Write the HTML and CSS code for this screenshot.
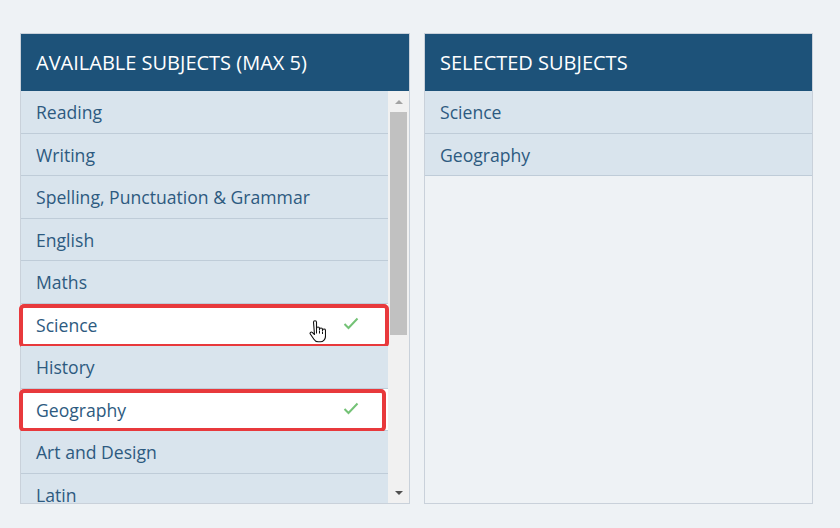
FILE: index.html
```html
<!DOCTYPE html>
<html lang="en">
<head>
    <meta charset="UTF-8">
    <meta name="viewport" content="width=device-width, initial-scale=1.0">
    <title>Subjects</title>
    <link rel="stylesheet" href="styles.css">
</head>
<body>
    <div class="picker">
        <div class="panel">
            <div class="panel-head">Available Subjects (Max 5)</div>
            <div class="panel-body">
                <div class="list">
                    <div class="row">Reading</div>
                    <div class="row">Writing</div>
                    <div class="row">Spelling, Punctuation &amp; Grammar</div>
                    <div class="row">English</div>
                    <div class="row">Maths</div>
                    <div class="row picked">Science
                        <svg class="tick" width="16" height="13" viewBox="0 0 16 13"><polyline points="1.5,7 5.5,11 14.5,1.5" fill="none" stroke="#74c276" stroke-width="2"/></svg>
                        <svg class="hand" width="18" height="24" viewBox="0 0 18 24">
                            <path d="M5.5 2.2a1.5 1.5 0 0 1 3 0v7.3v-1a1.5 1.5 0 0 1 3 0v1a1.5 1.5 0 0 1 3 0v1a1.5 1.5 0 0 1 3 0v5.5c0 3.2-2.2 5.8-5.2 5.8h-2.2c-2 0-3.2-1-4.2-2.6l-3.6-5.2c-.8-1.2.8-2.6 1.9-1.6l2.3 2.1z" fill="#fff" stroke="#111" stroke-width="1.1" stroke-linejoin="round"/>
                            <path d="M8.5 10v3.5M11.5 10.5v3M14.5 11.5v2.5" stroke="#111" stroke-width="1"/>
                        </svg>
                    </div>
                    <div class="row">History</div>
                    <div class="row picked alt">Geography
                        <svg class="tick" width="16" height="13" viewBox="0 0 16 13"><polyline points="1.5,7 5.5,11 14.5,1.5" fill="none" stroke="#74c276" stroke-width="2"/></svg>
                    </div>
                    <div class="row">Art and Design</div>
                    <div class="row">Latin</div>
                </div>
                <div class="scrollbar">
                    <div class="arrow up"></div>
                    <div class="track"><div class="thumb"></div></div>
                    <div class="arrow down"></div>
                </div>
            </div>
        </div>
        <div class="panel">
            <div class="panel-head">Selected Subjects</div>
            <div class="panel-body">
                <div class="list">
                    <div class="row">Science</div>
                    <div class="row">Geography</div>
                </div>
            </div>
        </div>
    </div>
</body>
</html>
```

FILE: styles.css
```css
body, html {
    margin: 0;
    padding: 0;
    background-color: #eef2f5;
    font-family: "Open Sans", Arial, sans-serif;
}
.picker {
    display: flex;
    gap: 14px;
    padding: 33px 0 0 20px;
}
.panel {
    box-sizing: border-box;
    width: 390px;
    height: 471px;
    border: 1px solid #c9d1da;
    display: flex;
    flex-direction: column;
}
.panel + .panel {
    width: 389px;
}
.panel-head {
    height: 57px;
    flex: none;
    display: flex;
    align-items: center;
    padding-left: 15px;
    background-color: #1d5279;
    color: #fff;
    font-size: 20px;
    text-transform: uppercase;
}
.panel-body {
    flex: 1;
    min-height: 0;
    display: flex;
}
.list {
    flex: 1;
    min-width: 0;
    clip-path: inset(-6px -6px 0 -6px);
}
.row {
    position: relative;
    box-sizing: border-box;
    height: 42.5px;
    display: flex;
    align-items: center;
    padding: 1px 15px 0;
    background-color: #d9e4ed;
    border-bottom: 1px solid #bfccd8;
    color: #2d5a80;
    font-size: 17.6px;
}
.picked {
    background-color: #fff;
}
.picked::after {
    content: "";
    position: absolute;
    left: -2px;
    right: -1px;
    top: 0;
    bottom: -3px;
    border: 4px solid #e8393c;
    border-radius: 5px;
}
.picked.alt::after {
    right: 2px;
    top: 0;
    bottom: -2px;
}
.tick {
    position: absolute;
    left: 322px;
    top: 13px;
}
.hand {
    position: absolute;
    left: 287px;
    top: 16px;
}
.scrollbar {
    width: 21px;
    flex: none;
    display: flex;
    flex-direction: column;
    background-color: #f1f1f1;
}
.arrow {
    height: 21px;
    flex: none;
    display: flex;
    align-items: center;
    justify-content: center;
}
.arrow::before {
    content: "";
    border-left: 4px solid transparent;
    border-right: 4px solid transparent;
}
.up::before {
    border-bottom: 4px solid #a3a3a3;
}
.down::before {
    border-top: 4px solid #505050;
}
.track {
    flex: 1;
    padding: 0 2px;
}
.thumb {
    height: 223px;
    background-color: #c1c1c1;
}
```
